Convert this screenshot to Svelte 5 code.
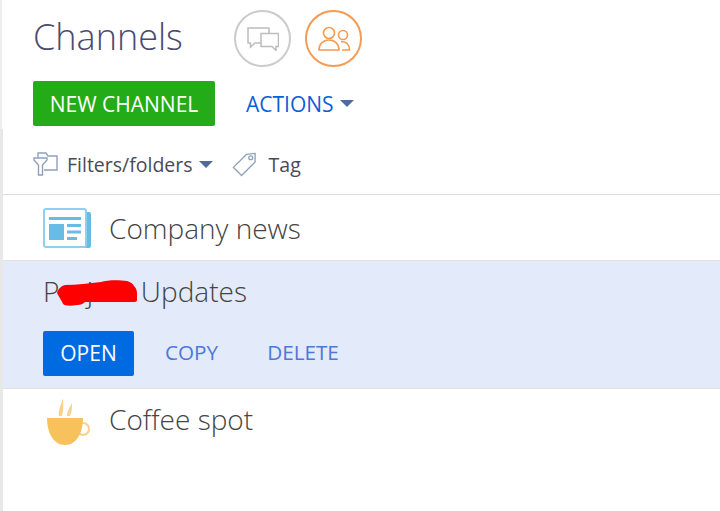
<script>
  let channels = [
    { name: "Company news", icon: "news" },
    { name: "Project Updates", icon: "none", active: true },
    { name: "Coffee spot", icon: "coffee" }
  ];
</script>

<div class="page">
  <div class="head">
    <header class="top">
      <h1>Channels</h1>
      <button class="round grey" aria-label="Chats">
        <svg width="32" height="24" viewBox="0 0 32 24" fill="#fff" stroke="#bdbdbd" stroke-width="1.5">
          <path d="M1 1h21v15H8l-4.500 4v-4H1z" />
          <path d="M14 6.500h17.500v13H29v4l-4-4H14z" />
        </svg>
      </button>
      <button class="round orange" aria-label="People">
        <svg width="34" height="25" viewBox="0 0 34 25" fill="none" stroke="#f59b52" stroke-width="1.6">
          <circle cx="12" cy="7" r="5.500" />
          <circle cx="26" cy="9" r="4.500" />
          <path d="M2 24c0-6 4-10 10-10s10 4 10 10z" />
          <path d="M24 15.500c5 0 8.500 3 8.500 8.500H25" />
        </svg>
      </button>
    </header>

    <div class="actions">
      <button class="btn green">NEW CHANNEL</button>
      <button class="link">ACTIONS <span class="caret"></span></button>
    </div>
  </div>

  <div class="body">
    <div class="filters">
      <svg class="ficon" width="25" height="25" viewBox="0 0 25 25" fill="none" stroke="#8fa1bd" stroke-width="1.4">
        <path d="M5 6V1h8l2 3h9v14H11" />
        <path d="M1 6h13v2l-4.500 5v10h-4V13L1 8z" fill="#fff" />
      </svg>
      <span class="ftext">Filters/folders</span>
      <span class="caret"></span>
      <svg class="ticon" width="25" height="25" viewBox="0 0 26 26" fill="none" stroke="#8fa1bd" stroke-width="1.4">
        <path d="M1.500 16L15 2.500 24 1.500 24 10.500 10 24.500z" />
        <circle cx="19.500" cy="6" r="2" />
      </svg>
      <span class="ftext tag">Tag</span>
    </div>

    <ul class="list">
      {#each channels as c}
        <li class:active={c.active}>
          <div class="row">
            {#if c.icon === "news"}
              <svg class="cicon" width="48" height="40" viewBox="0 0 48 40">
                <path d="M40 4h6a2 2 0 0 1 2 2v32a2 2 0 0 1-2 2H40z" fill="#68bbe3" />
                <rect x="1" y="1" width="42" height="38" rx="2" fill="#fff" stroke="#8fd0ee" stroke-width="2" />
                <rect x="6" y="9" width="32" height="3" fill="#68bbe3" />
                <rect x="6" y="16" width="15" height="16" fill="#68bbe3" />
                <rect x="24" y="16" width="14" height="3" fill="#68bbe3" />
                <rect x="24" y="22.500" width="14" height="3" fill="#68bbe3" />
                <rect x="24" y="29" width="10" height="3" fill="#68bbe3" />
              </svg>
            {:else if c.icon === "coffee"}
              <svg class="cicon coffee" width="44" height="48" viewBox="0 0 44 48">
                <path d="M12 18c-1-6 2-11 4-18 0 6 1 12-1 18z M20 18c0-5 3-9 5-13 0 5 0 9-2 13z" fill="#f8d28c" />
                <circle cx="36" cy="31" r="6" fill="none" stroke="#f8d28c" stroke-width="2.200" />
                <path d="M0 20h36c0 14-6 27-18 27S0 34 0 20z" fill="#f7c25c" />
              </svg>
            {/if}
            <span class="name" class:plain={c.active}>{c.name}</span>
            {#if c.active}
              <svg class="scribble" width="80" height="27" viewBox="0 0 80 27">
                <path d="M0 13C1 9 4 6 8 5 20 5 32 3 44 2 50 0 62 0 70 1 74 2 76 4 77 6 79 8 80 10 80 14V20C80 22 78 22 76 22L28 22C26 24 24 25 20 25 14 26 8 26 6 24 5 21 3 19 0 13z" fill="#f00" />
              </svg>
            {/if}
          </div>
          {#if c.active}
            <div class="item-actions">
              <button class="btn blue">OPEN</button>
              <button class="link soft">COPY</button>
              <button class="link soft">DELETE</button>
            </div>
          {/if}
        </li>
      {/each}
    </ul>
  </div>
</div>

<style>
  :global(body) {
    background: #fff;
  }

  .page {
    height: 511px;
    display: flex;
    flex-direction: column;
    overflow: hidden;
    font-family: "Open Sans", sans-serif;
    color: #444;
  }

  /* left edge is 2px up here, 3px from the filters down */
  .head {
    border-left: 2px solid #eeeeee;
    padding-left: 1px;
    padding-bottom: 3px;
  }

  .body {
    flex: 1;
    border-left: 3px solid #e8e8e8;
  }

  .top {
    display: flex;
    align-items: center;
    height: 57px;
    padding: 10px 0 0 30px;
  }

  h1 {
    margin: -4px 0 0;
    font-size: 36px;
    font-weight: 300;
    color: #4a4a6e;
    width: 201px;
  }

  .round {
    width: 57px;
    height: 57px;
    padding: 0;
    border-radius: 50%;
    background: #fff;
    display: flex;
    align-items: center;
    justify-content: center;
    margin-right: 14px;
  }

  .grey { border: 2px solid #cbcbcb; }
  .orange { border: 2px solid #f59b52; }

  .actions {
    display: flex;
    align-items: center;
    gap: 31px;
    padding: 14px 0 0 30px;
  }

  .btn {
    border: none;
    border-radius: 2px;
    color: #fff;
    font-family: inherit;
    font-size: 21px;
    height: 45px;
    padding: 0;
  }

  .green {
    width: 182px;
    background: #23ac17;
  }

  .blue {
    width: 91px;
    background: #006be0;
    padding-bottom: 2px;
  }

  .link {
    border: none;
    background: none;
    padding: 0;
    font-family: inherit;
    font-size: 21px;
    color: #0a5fd8;
    display: flex;
    align-items: center;
    gap: 6px;
  }

  .caret {
    display: inline-block;
    border-left: 7px solid transparent;
    border-right: 7px solid transparent;
    border-top: 7px solid #4e6a9e;
  }

  .filters {
    display: flex;
    align-items: center;
    height: 60px;
    padding: 5px 0 0 30px;
    border-bottom: 1px solid #e0e0e0;
  }

  .ficon { margin-right: 9px; }
  .ticon { margin-left: 19px; margin-right: 12px; }

  .ftext {
    font-size: 19.500px;
    color: #4a4a55;
    margin-right: 6px;
  }

  .tag { margin-right: 0; }

  .list {
    list-style: none;
    margin: 0;
    padding: 0;
  }

  li {
    border-bottom: 1px solid #e0e0e0;
  }

  li:last-child { border-bottom: none; }

  li.active {
    background: #e3eaf9;
  }

  .row {
    position: relative;
    display: flex;
    align-items: center;
    height: 65px;
    padding-left: 40px;
  }

  .cicon { margin-right: 18px; }
  .coffee { margin-left: 4px; margin-right: 18px; }

  .name {
    font-size: 28px;
    font-weight: 300;
    color: #444;
  }

  .name.plain {
    margin-top: -6px;
    word-spacing: 2.500px;
  }

  li:last-child .name { margin-top: -6px; }

  .scribble {
    position: absolute;
    left: 54px;
    top: 19px;
  }

  .item-actions {
    display: flex;
    align-items: center;
    gap: 31px;
    padding: 5px 0 12px 40px;
  }

  .soft {
    color: #4d78d8;
    font-size: 20.700px;
    margin-top: -3px;
  }

  .soft:last-child { margin-left: 18px; }
</style>
